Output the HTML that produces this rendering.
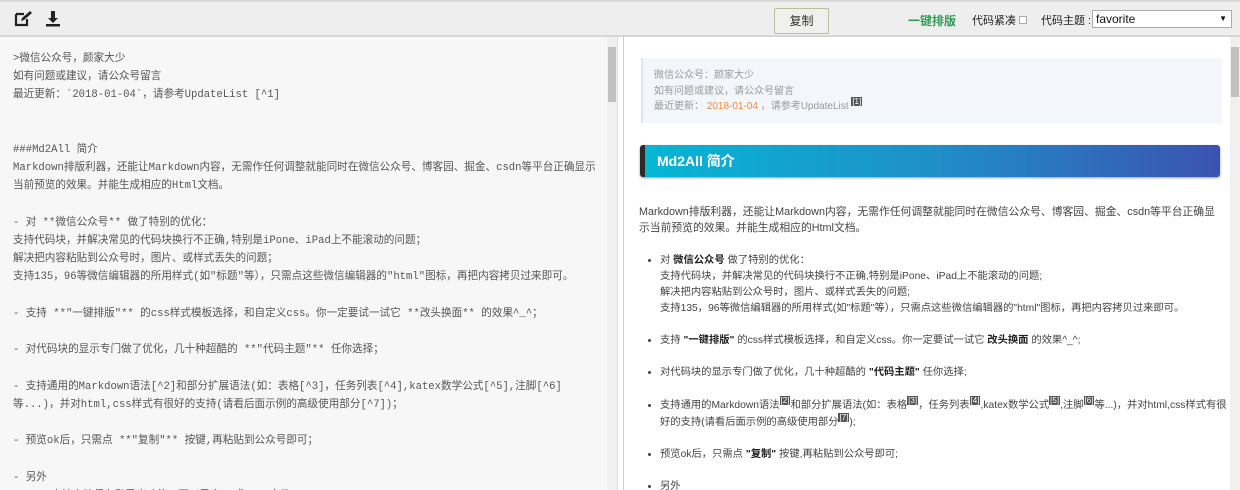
<!DOCTYPE html>
<html><head><meta charset="utf-8"><style>
*{margin:0;padding:0;box-sizing:border-box}
html,body{width:1240px;height:490px;overflow:hidden}
body{background:#fff;font-family:"Liberation Sans","Noto Sans CJK SC",sans-serif;position:relative}
.top{position:absolute;left:0;top:0;width:1240px;height:37px;background:#eeeeee;border-top:2px solid #d8d8d8;border-bottom:2px solid #d6d6d6}
.btn{position:absolute;left:774px;top:6px;width:55px;height:26px;border:1px solid #b8c29a;background:#f0f0ee;font-size:12px;line-height:24px;text-align:center;color:#333;border-radius:2px}
.left{position:absolute;left:0;top:37px;width:618px;height:453px;background:#f7f7f7;border-right:1px solid #ddd;overflow:hidden}
.lt{position:absolute;left:13px;top:13px;font-family:"Liberation Mono","Noto Sans CJK SC",monospace;font-size:10.6px;line-height:18.2px;color:#555;white-space:pre}
.sb{position:absolute;width:10px;background:#f0f0f0}
.thumb{position:absolute;background:#c1c1c1}
.right{position:absolute;left:623px;top:37px;width:617px;height:453px;background:#fff;border-left:1px solid #ccc;overflow:hidden}
.bq{position:absolute;left:17px;top:21px;width:581px;height:65px;background:#f3f6fa;border-left:2px solid #dde6f0;font-size:10px;color:#999;line-height:15.5px;padding:10px 0 0 11px}
.h{position:absolute;left:16px;top:108px;width:580px;height:32px;background:linear-gradient(90deg,#06b6d4,#1f8fc8 50%,#3b52b0);border-left:5px solid #2a2a2a;border-radius:3px;color:#fff;font-weight:bold;font-size:14px;line-height:32px;padding-left:12px;box-shadow:0 1px 2px #999}
.p{position:absolute;left:15px;font-size:10.8px;color:#444;line-height:16px}
ul{position:absolute;left:36px;top:216px;width:568px;font-size:10.3px;color:#444;line-height:16px}
li{margin-bottom:16px;list-style:disc}
sup{font-size:8px;background:#555;color:#fff;padding:0 1px;vertical-align:5px;line-height:0}
b{color:#222}
</style></head><body>
<div class="top">
<svg style="position:absolute;left:14px;top:8px" width="20" height="18" viewBox="0 0 20 18"><path d="M2 4h8M2 4v11h11v-6" fill="none" stroke="#222" stroke-width="2.2"/><path d="M7 11l1-3 8-7 2 2-8 7z" fill="#222"/></svg>
<svg style="position:absolute;left:43px;top:8px" width="20" height="18" viewBox="0 0 20 18"><path d="M8 1h4v7h3l-5 5-5-5h3z" fill="#222"/><rect x="3" y="14" width="14" height="2.5" fill="#222"/></svg>
<div class="btn">复制</div>
<div style="position:absolute;left:908px;top:10px;font-size:12px;font-weight:bold;color:#2e9a56">一键排版</div>
<div style="position:absolute;left:972px;top:10px;font-size:11px;color:#222">代码紧凑 <span style="display:inline-block;width:8px;height:8px;border:1px solid #aaa;background:#fff"></span></div>
<div style="position:absolute;left:1041px;top:10px;font-size:11px;color:#222">代码主题 :</div>
<div style="position:absolute;left:1092px;top:8px;width:140px;height:18px;background:#fff;border:1px solid #aaa;font-size:12px;line-height:16px;padding-left:3px;color:#111">favorite<span style="position:absolute;right:4px;font-size:8px">▼</span></div>
</div>
<div class="left">
<div class="lt">&gt;微信公众号，颜家大少
如有问题或建议，请公众号留言
最近更新：`2018-01-04`，请参考UpdateList [^1]


###Md2All 简介
Markdown排版利器，还能让Markdown内容，无需作任何调整就能同时在微信公众号、博客园、掘金、csdn等平台正确显示
当前预览的效果。并能生成相应的Html文档。

- 对 **微信公众号** 做了特别的优化：
支持代码块，并解决常见的代码块换行不正确,特别是iPone、iPad上不能滚动的问题；
解决把内容粘贴到公众号时，图片、或样式丢失的问题；
支持135，96等微信编辑器的所用样式(如"标题"等），只需点这些微信编辑器的"html"图标，再把内容拷贝过来即可。

- 支持 **"一键排版"** 的css样式模板选择，和自定义css。你一定要试一试它 **改头换面** 的效果^_^；

- 对代码块的显示专门做了优化，几十种超酷的 **"代码主题"** 任你选择；

- 支持通用的Markdown语法[^2]和部分扩展语法(如：表格[^3]，任务列表[^4],katex数学公式[^5],注脚[^6]
等...)，并对html,css样式有很好的支持(请看后面示例的高级使用部分[^7])；

- 预览ok后，只需点 **"复制"** 按键,再粘贴到公众号即可；

- 另外
    - 支持本地保存和导出功能：可以导出md或html文件</div>
<div class="sb" style="left:607px;top:0;height:453px"></div>
<div class="thumb" style="left:608px;top:10px;width:8px;height:55px"></div>
</div>
<div class="right">
<div class="bq">微信公众号：颜家大少<br>如有问题或建议，请公众号留言<br>最近更新： <span style="color:#f08a3c">2018-01-04</span> ，请参考UpdateList <sup>[1]</sup></div>
<div class="h">Md2All 简介</div>
<div class="p" style="top:167px;width:580px">Markdown排版利器，还能让Markdown内容，无需作任何调整就能同时在微信公众号、博客园、掘金、csdn等平台正确显示当前预览的效果。并能生成相应的Html文档。</div>
<ul>
<li>对 <b>微信公众号</b> 做了特别的优化：<br>支持代码块，并解决常见的代码块换行不正确,特别是iPone、iPad上不能滚动的问题;<br>解决把内容粘贴到公众号时，图片、或样式丢失的问题;<br>支持135，96等微信编辑器的所用样式(如"标题"等），只需点这些微信编辑器的"html"图标，再把内容拷贝过来即可。</li>
<li>支持 <b>"一键排版"</b> 的css样式模板选择，和自定义css。你一定要试一试它 <b>改头换面</b> 的效果^_^;</li>
<li>对代码块的显示专门做了优化，几十种超酷的 <b>"代码主题"</b> 任你选择;</li>
<li style="line-height:17px">支持通用的Markdown语法<sup>[2]</sup>和部分扩展语法(如：表格<sup>[3]</sup>，任务列表<sup>[4]</sup>,katex数学公式<sup>[5]</sup>,注脚<sup>[6]</sup>等...)，并对html,css样式有很好的支持(请看后面示例的高级使用部分<sup>[7]</sup>);</li>
<li>预览ok后，只需点 <b>"复制"</b> 按键,再粘贴到公众号即可;</li>
<li>另外</li>
</ul>
<div class="sb" style="left:606px;top:0;height:453px"></div>
<div class="thumb" style="left:607px;top:10px;width:8px;height:50px"></div>
</div>
</body></html>
